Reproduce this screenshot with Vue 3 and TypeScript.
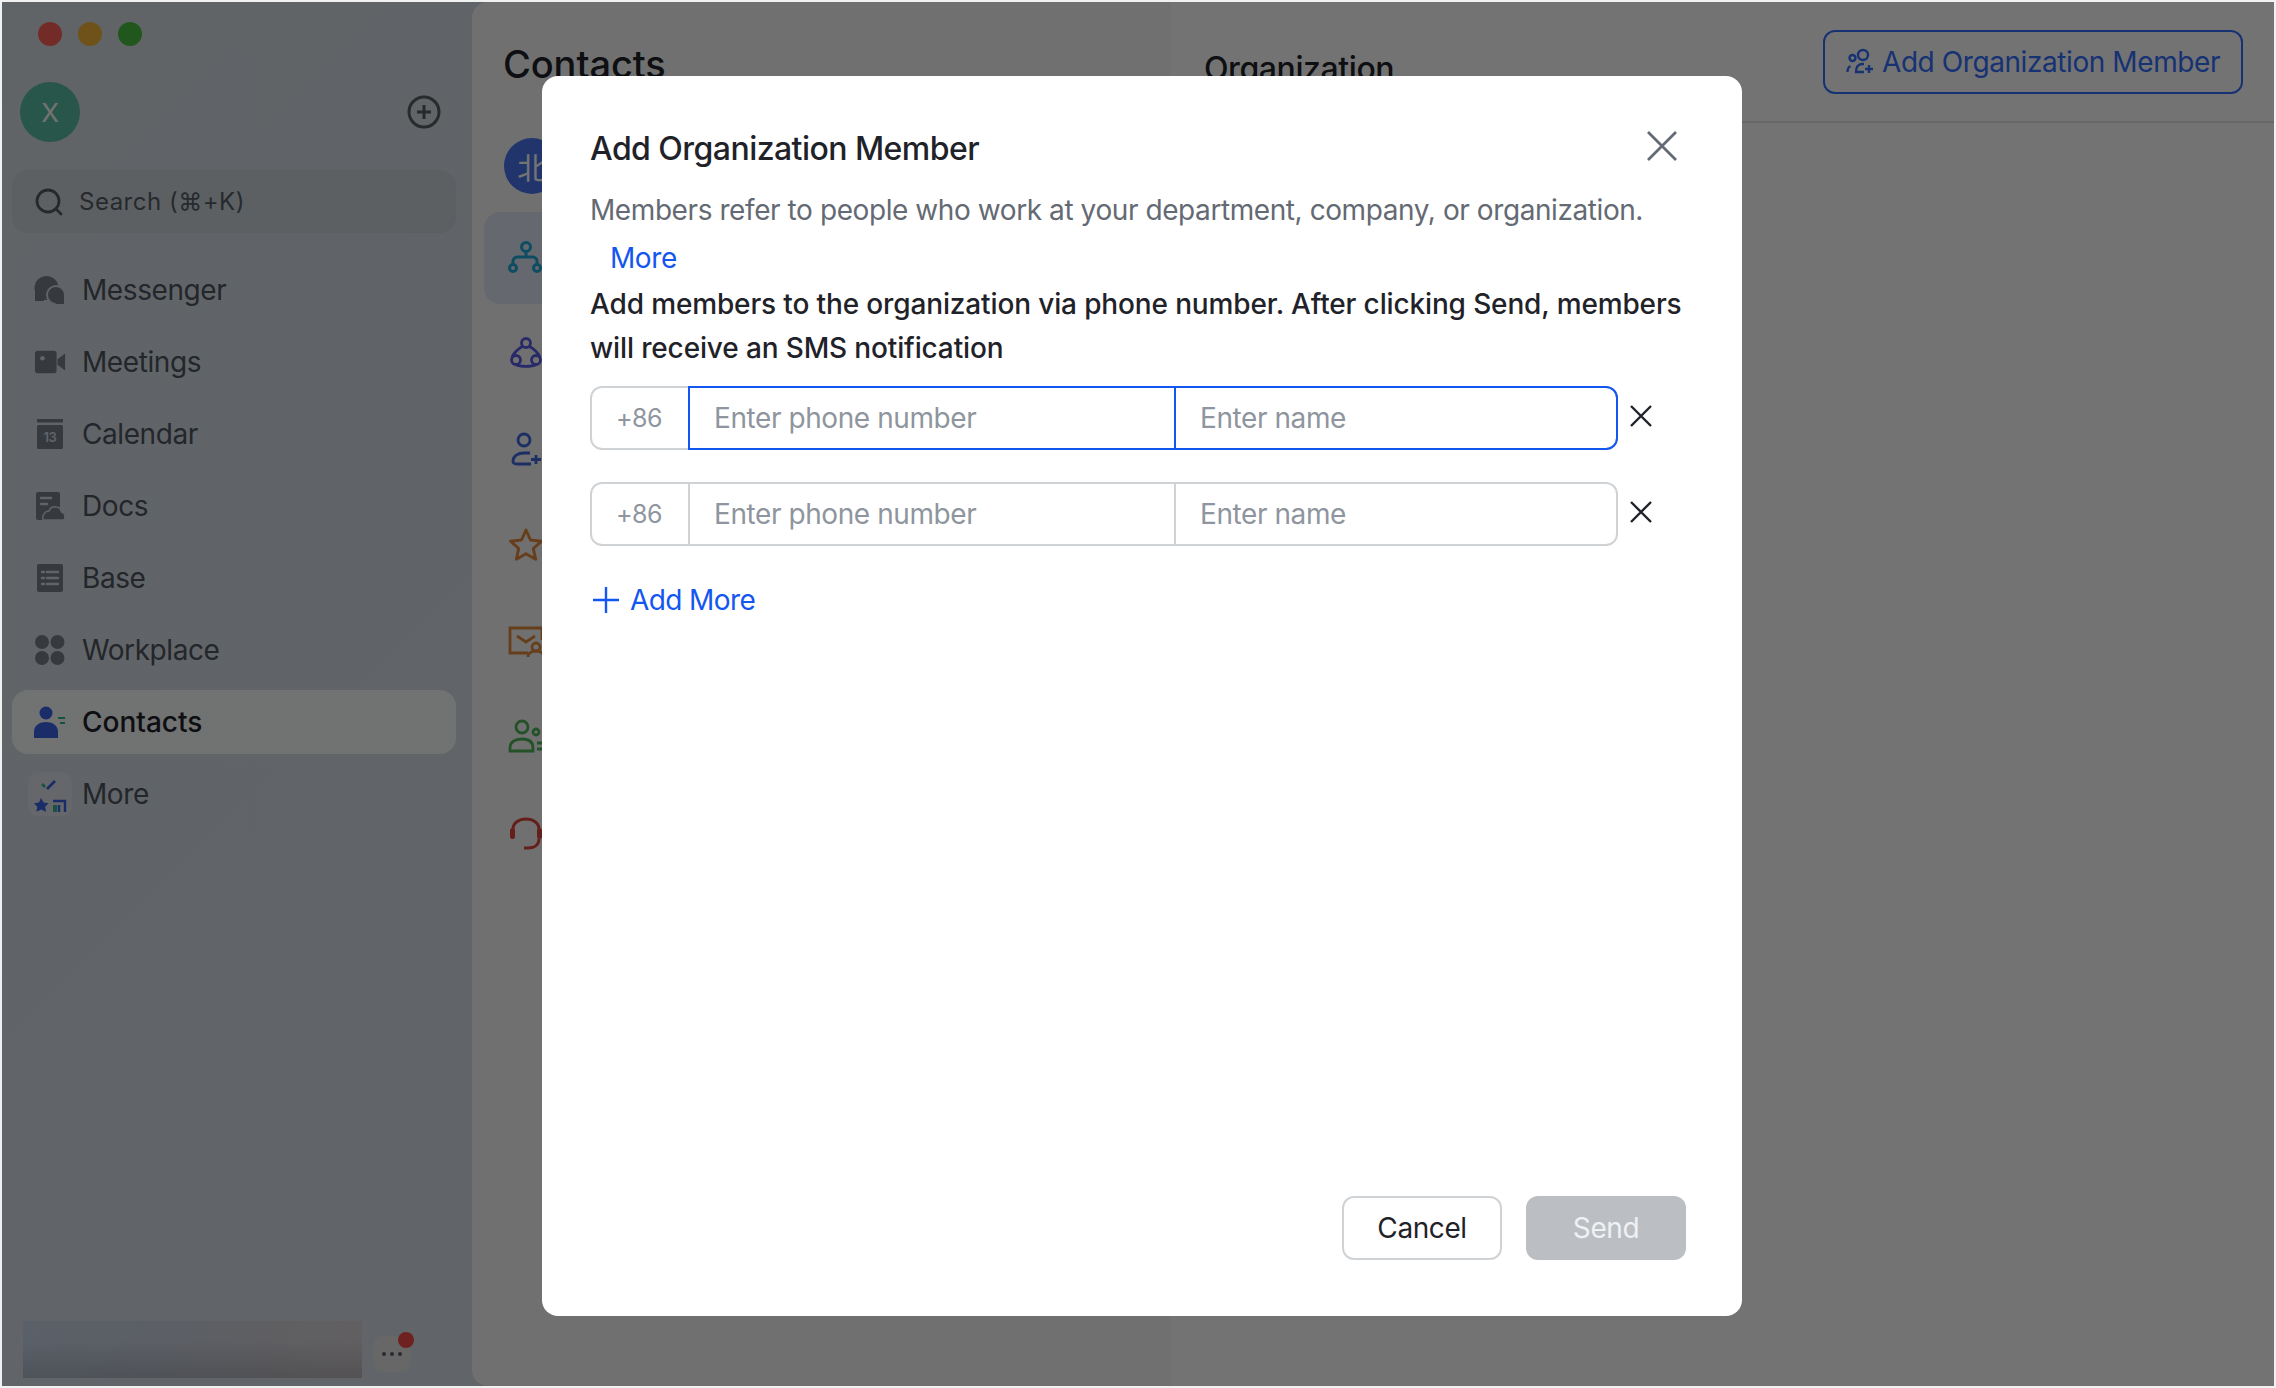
<script setup lang="ts">
interface NavItem {
  label: string;
  icon: string;
  active?: boolean;
}

interface MemberRow {
  id: number;
  focused: boolean;
}

const navItems: NavItem[] = [
  { label: 'Messenger', icon: 'messenger' },
  { label: 'Meetings', icon: 'meetings' },
  { label: 'Calendar', icon: 'calendar' },
  { label: 'Docs', icon: 'docs' },
  { label: 'Base', icon: 'base' },
  { label: 'Workplace', icon: 'workplace' },
  { label: 'Contacts', icon: 'contacts', active: true },
  { label: 'More', icon: 'more' }
];

const memberRows: MemberRow[] = [
  { id: 1, focused: true },
  { id: 2, focused: false }
];
</script>

<template>
  <div class="window">
    <aside class="sidebar">
      <div class="lights">
        <span class="light red"></span>
        <span class="light yellow"></span>
        <span class="light green"></span>
      </div>
      <div class="account">
        <div class="avatar">X</div>
        <svg class="add-icon" width="34" height="34" viewBox="0 0 34 34" fill="none" stroke="#5a5d63" stroke-width="3">
          <circle cx="17" cy="17" r="15" />
          <path d="M17 10v14M10 17h14" />
        </svg>
      </div>
      <div class="search">
        <svg width="30" height="30" viewBox="0 0 30 30" fill="none" stroke="#565a62" stroke-width="2.800">
          <circle cx="14" cy="14" r="11" />
          <path d="M22 22l5 5" stroke-linecap="round" />
        </svg>
        <span>Search (⌘+K)</span>
      </div>
      <nav class="nav">
        <div v-for="item in navItems" :key="item.label" class="nav-item" :class="{ active: item.active }">
          <span class="nav-icon">
            <svg v-if="item.icon === 'messenger'" width="32" height="32" viewBox="0 0 32 32">
              <circle cx="12.500" cy="14" r="12" fill="#78808a" />
              <path d="M1 15v12h9v-6z" fill="#78808a" />
              <circle cx="22" cy="21" r="9" fill="#78808a" stroke="#d6dde7" stroke-width="2" />
              <path d="M21 30h9v-8z" fill="#78808a" />
            </svg>
            <svg v-else-if="item.icon === 'meetings'" width="34" height="28" viewBox="0 0 34 28">
              <rect x="1" y="2" width="23" height="24" rx="3" fill="#78808a" />
              <path d="M25 11l8-6v18l-8-6z" fill="#78808a" />
              <circle cx="9" cy="10" r="2.500" fill="#d6dde7" />
            </svg>
            <svg v-else-if="item.icon === 'calendar'" width="28" height="30" viewBox="0 0 28 30">
              <rect x="1" y="0" width="26" height="3.500" fill="#78808a" />
              <rect x="1" y="6" width="26" height="24" rx="1.500" fill="#78808a" />
              <text x="14" y="23" text-anchor="middle" class="cal-num">13</text>
            </svg>
            <svg v-else-if="item.icon === 'docs'" width="30" height="30" viewBox="0 0 30 30">
              <rect x="1" y="1" width="24" height="28" rx="2" fill="#78808a" />
              <path d="M6 7h10M6 13h6" stroke="#d6dde7" stroke-width="2.500" stroke-linecap="round" />
              <path d="M8 29c-1-5 2-9 6-9 1-3 4-5 7-4 3 0 5 2 5.500 5 2 .5 3.500 3 3.500 5 0 2-1 3-2 3z" fill="#78808a" stroke="#d6dde7" stroke-width="1.500" />
            </svg>
            <svg v-else-if="item.icon === 'base'" width="28" height="30" viewBox="0 0 28 30">
              <rect x="1" y="1" width="26" height="28" rx="2" fill="#78808a" />
              <path d="M6 9h2M11 9h11M6 15h2M11 15h11M6 21h2M11 21h11" stroke="#d6dde7" stroke-width="2.400" stroke-linecap="round" />
            </svg>
            <svg v-else-if="item.icon === 'workplace'" width="30" height="32" viewBox="0 0 30 32" fill="#78808a">
              <circle cx="7" cy="8" r="7" />
              <circle cx="22.500" cy="8" r="7" />
              <circle cx="7" cy="24" r="7" />
              <circle cx="22.500" cy="24" r="7" />
            </svg>
            <svg v-else-if="item.icon === 'contacts'" width="32" height="32" viewBox="0 0 32 32">
              <circle cx="12" cy="7" r="6.500" fill="#3a64e8" />
              <path d="M0 32v-6c0-7 6-10 12-10s12 3 12 10v6z" fill="#3a64e8" />
              <path d="M24 12h7M26 17h5" stroke="#33b48c" stroke-width="2.200" />
            </svg>
            <svg v-else width="44" height="44" viewBox="0 0 44 44" class="more-icon">
              <rect x="0" y="0" width="44" height="44" rx="10" fill="#dfe4ec" />
              <path d="M19 17l8-8" stroke="#3a64e8" stroke-width="2.600" />
              <path d="M14 12l3 3" stroke="#33b48c" stroke-width="2.600" />
              <path d="M13 26l2.600 4.500 5 .7-3.500 3.600 1 5-5-2.300-4.700 2.300.9-5L6 31.200l5-.7z" fill="#3a64e8" />
              <path d="M25 29h12v11M31 33v7" fill="none" stroke="#3a64e8" stroke-width="2.400" />
              <path d="M25 33h4v7h-4z" fill="#33b48c" />
            </svg>
          </span>
          <span class="nav-label">{{ item.label }}</span>
        </div>
      </nav>
      <div class="footer">
        <div class="blur-box"></div>
        <div class="dots">
          <span></span><span></span><span></span>
          <i class="badge"></i>
        </div>
      </div>
    </aside>

    <section class="contacts-panel">
      <h1 class="contacts-title">Contacts</h1>
      <div class="org-avatar">北</div>
      <div class="entry selected">
        <svg width="36" height="36" viewBox="0 0 36 36" fill="none" stroke="#20a8d8" stroke-width="3">
          <circle cx="18" cy="8" r="4.500" />
          <circle cx="5" cy="29" r="3.500" />
          <circle cx="29" cy="29" r="3.500" />
          <path d="M18 12.500V18M5 25.500V22c0-2 2-4 4-4h16c2 0 4 2 4 4v3.500" />
        </svg>
      </div>
      <div class="entry">
        <svg width="36" height="36" viewBox="0 0 36 36" fill="none" stroke="#5a5ce6" stroke-width="2.800">
          <circle cx="18" cy="8" r="4.500" />
          <circle cx="8" cy="25" r="4.500" />
          <circle cx="28" cy="25" r="4.500" />
          <path d="M15 11c-5 3-9 7-11 11M21 11c5 3 9 7 11 11M8 29.500c4 2.500 16 2.500 20 0" />
        </svg>
      </div>
      <div class="entry">
        <svg width="36" height="36" viewBox="0 0 36 36" fill="none" stroke="#3f66e0" stroke-width="2.800">
          <circle cx="16" cy="9" r="6" />
          <path d="M23 33H9c-2 0-4 0-4-3 0-5 5-8 11-8h6" />
          <path d="M28 24v9M23 28.500h10" />
        </svg>
      </div>
      <div class="entry">
        <svg width="36" height="36" viewBox="0 0 36 36" fill="none" stroke="#e58a3c" stroke-width="3" stroke-linejoin="round">
          <path d="M18 3l4.500 10 11 1.200-8.200 7.300 2.300 10.800L18 26.800 8.400 32.300l2.300-10.800L2.500 14.200l11-1.200z" />
        </svg>
      </div>
      <div class="entry">
        <svg width="36" height="36" viewBox="0 0 36 36" fill="none" stroke="#e58a3c" stroke-width="2.800">
          <path d="M20 30H2V5h32v12" />
          <path d="M9 13l9 6 9-6" />
          <circle cx="28" cy="24" r="4" />
          <path d="M20 34c0-4 4-6 8-6s8 2 8 6" />
        </svg>
      </div>
      <div class="entry">
        <svg width="36" height="36" viewBox="0 0 36 36" fill="none" stroke="#4fb35a" stroke-width="2.800">
          <circle cx="14" cy="8" r="6" />
          <circle cx="28" cy="13" r="3" />
          <path d="M2 32v-3c0-6 5-9 12-9s11 3 11 9v3z" />
          <path d="M29 24h7M29 30h7" />
        </svg>
      </div>
      <div class="entry">
        <svg width="36" height="36" viewBox="0 0 36 36" fill="none" stroke="#e0463c" stroke-width="3">
          <path d="M5 14C5 8 11 4 18 4s13 4 13 10" />
          <path d="M31 24c0 6-5 9-11 9h-4" />
          <rect x="2" y="13" width="5" height="11" rx="2.500" fill="#e0463c" stroke="none" />
          <rect x="29" y="13" width="5" height="11" rx="2.500" fill="#e0463c" stroke="none" />
        </svg>
      </div>
    </section>

    <main class="detail">
      <header class="detail-head">
        <h2 class="detail-title">Organization</h2>
        <button class="add-member" type="button">
          <svg width="28" height="28" viewBox="0 0 28 28" fill="none" stroke="#3370ff" stroke-width="2.400">
            <circle cx="17" cy="7" r="5" />
            <circle cx="6.500" cy="10" r="3" />
            <path d="M18 16h-2c-4 0-6 3-6 8h8" />
            <path d="M1.500 24c0-3 1-5 3-6" />
            <path d="M23 17v8M19 21h8" />
          </svg>
          Add Organization Member
        </button>
      </header>
    </main>

    <div class="mask"></div>

    <div class="modal">
      <svg class="modal-close" width="34" height="34" viewBox="0 0 34 34" fill="none" stroke="#646a73" stroke-width="2.800">
        <path d="M3 3l28 28M31 3L3 31" />
      </svg>
      <h3 class="modal-title">Add Organization Member</h3>
      <p class="modal-desc">Members refer to people who work at your department, company, or organization.</p>
      <a class="modal-more">More</a>
      <p class="modal-note">Add members to the organization via phone number. After clicking Send, members will receive an SMS notification</p>

      <div class="rows">
        <div v-for="row in memberRows" :key="row.id" class="member-row">
          <div class="group" :class="{ focused: row.focused }">
            <span class="prefix">+86</span>
            <input class="phone" type="text" placeholder="Enter phone number" />
            <input class="name" type="text" placeholder="Enter name" />
          </div>
          <svg class="row-remove" width="24" height="24" viewBox="0 0 24 24" fill="none" stroke="#1f2329" stroke-width="2.400">
            <path d="M2 2l20 20M22 2L2 22" />
          </svg>
        </div>
      </div>

      <div class="add-more">
        <svg width="28" height="28" viewBox="0 0 28 28" fill="none" stroke="#1456f0" stroke-width="2.400">
          <path d="M14 1v26M1 14h26" />
        </svg>
        <span>Add More</span>
      </div>

      <div class="modal-actions">
        <button class="btn cancel" type="button">Cancel</button>
        <button class="btn send" type="button">Send</button>
      </div>
    </div>
  </div>
</template>

<style>
html,
body {
  margin: 0;
  background: #f1f1f1;
}
</style>

<style scoped>
.window {
  position: relative;
  display: flex;
  width: 2272px;
  height: 1384px;
  margin: 2px;
  overflow: hidden;
  font-family: Inter, "Noto Sans CJK SC", sans-serif;
  letter-spacing: -0.42px;
  background: linear-gradient(135deg, #d6dde5 0%, #d8dee6 50%, #dbdde5 100%);
}

.sidebar {
  display: flex;
  flex-direction: column;
  flex: 0 0 470px;
}

.lights {
  display: flex;
  gap: 16px;
  margin: 20px 0 0 36px;
}

.light {
  width: 24px;
  height: 24px;
  border-radius: 50%;
}

.light.red { background: #ff6159; }
.light.yellow { background: #f5b53b; }
.light.green { background: #4bc23f; }

.account {
  display: flex;
  align-items: center;
  justify-content: space-between;
  margin-top: 36px;
  padding: 0 31px 0 18px;
}

.avatar {
  display: flex;
  align-items: center;
  justify-content: center;
  width: 60px;
  height: 60px;
  border-radius: 50%;
  color: #fff;
  font-size: 26px;
  background: #5cbfa6;
}

.search {
  display: flex;
  align-items: center;
  gap: 15px;
  height: 63px;
  margin: 28px 16px 0 10px;
  padding-left: 21px;
  box-sizing: border-box;
  border: 1px solid #cdd3da;
  border-radius: 16px;
  color: #565d67;
  font-size: 24px;
  letter-spacing: 0.5px;
  background: #ced4dc;
}

.nav {
  display: flex;
  flex-direction: column;
  gap: 8px;
  margin: 25px 16px 0 10px;
}

.nav-item {
  display: flex;
  align-items: center;
  gap: 16px;
  height: 64px;
  padding-left: 22px;
  border-radius: 16px;
}

.nav-item.active {
  background: #fbfcfd;
}

.nav-icon {
  display: flex;
  align-items: center;
  justify-content: center;
  width: 32px;
  height: 32px;
}

.more-icon {
  flex: none;
}

.cal-num {
  fill: #d6dde7;
  font-size: 13px;
  font-weight: 600;
}

.nav-label {
  color: #4f555f;
  font-size: 28px;
}

.nav-item.active .nav-label {
  color: #1f2329;
  font-weight: 500;
  letter-spacing: 0;
}

.footer {
  display: flex;
  align-items: flex-end;
  gap: 12px;
  margin-top: auto;
  padding: 0 0 8px 21px;
}

.blur-box {
  width: 339px;
  height: 57px;
  background:
    linear-gradient(180deg, transparent 35%, rgba(0, 0, 0, 0.14) 100%),
    linear-gradient(90deg, #c8d6e8 0%, #cdd2de 50%, #d8d2d6 100%);
}

.dots {
  position: relative;
  display: flex;
  align-items: center;
  justify-content: center;
  gap: 4px;
  width: 36px;
  height: 36px;
  margin-bottom: 6px;
  border-radius: 8px;
  background: #e4e4e6;
}

.dots span {
  width: 4px;
  height: 4px;
  border-radius: 50%;
  background: #5b6068;
}

.badge {
  position: absolute;
  top: -4px;
  right: -4px;
  width: 16px;
  height: 16px;
  border-radius: 50%;
  background: #f54a45;
}

.contacts-panel {
  flex: 0 0 699px;
  padding: 0 0 0 12px;
  box-sizing: border-box;
  border-top-left-radius: 16px;
  border-bottom-left-radius: 16px;
  background: #f9f9f9;
}

.contacts-title {
  margin: 34px 0 0 19px;
  color: #1f2329;
  font-size: 38px;
  font-weight: 500;
  line-height: 56px;
  letter-spacing: -0.1px;
}

.org-avatar {
  display: flex;
  align-items: center;
  justify-content: center;
  width: 56px;
  height: 56px;
  margin: 46px 0 0 20px;
  border-radius: 50%;
  color: #fff;
  font-size: 30px;
  background: #4a76f0;
}

.entry {
  display: flex;
  align-items: center;
  height: 92px;
  margin-top: 4px;
  padding: 0 0 3px 24px;
  box-sizing: border-box;
}

.entry.selected {
  margin-top: 18px;
  border-radius: 16px;
  background: #e1e6f4;
}

.detail {
  flex: 1;
  background: #fff;
}

.detail-head {
  display: flex;
  align-items: center;
  justify-content: space-between;
  height: 121px;
  padding: 0 31px 0 33px;
  box-sizing: border-box;
  border-bottom: 2px solid #e4e4e4;
}

.detail-title {
  margin: 14px 0 0;
  color: #1f2329;
  font-size: 32px;
  font-weight: 500;
}

.add-member {
  display: flex;
  align-items: center;
  justify-content: center;
  gap: 8px;
  width: 420px;
  height: 64px;
  border: 2px solid #3370ff;
  border-radius: 12px;
  color: #3370ff;
  font-family: inherit;
  font-size: 28px;
  letter-spacing: inherit;
  background: transparent;
}

.mask {
  position: absolute;
  inset: 0;
  background: rgba(0, 0, 0, 0.55);
}

.modal {
  position: absolute;
  top: 74px;
  left: 540px;
  display: flex;
  flex-direction: column;
  width: 1200px;
  height: 1240px;
  padding: 51px 56px 56px 48px;
  box-sizing: border-box;
  border-radius: 16px;
  background: #fff;
}

.modal-close {
  position: absolute;
  top: 53px;
  right: 63px;
}

.modal-title {
  margin: 0;
  color: #1f2329;
  font-size: 32px;
  font-weight: 500;
  line-height: 44px;
  letter-spacing: -0.55px;
}

.modal-desc {
  margin: 17px 0 0;
  color: #646a73;
  font-size: 28px;
  line-height: 44px;
}

.modal-more {
  margin: 2px 0 0 20px;
  color: #1456f0;
  font-size: 28px;
  line-height: 48px;
}

.modal-note {
  margin: 0;
  color: #1f2329;
  font-size: 28px;
  font-weight: 500;
  line-height: 44px;
  letter-spacing: -0.14px;
}

.rows {
  display: flex;
  flex-direction: column;
  gap: 32px;
  margin-top: 16px;
}

.member-row {
  display: flex;
  align-items: center;
  gap: 11px;
}

.row-remove {
  margin-top: -4px;
}

.group {
  position: relative;
  display: flex;
  width: 1028px;
  height: 64px;
  box-sizing: border-box;
  border: 2px solid #d0d3d6;
  border-radius: 12px;
}

.prefix {
  display: flex;
  align-items: center;
  justify-content: center;
  width: 98px;
  padding-right: 2px;
  color: #8f959e;
  font-size: 25px;
  box-sizing: border-box;
  border-right: 2px solid #d0d3d6;
}

.group input {
  min-width: 0;
  padding: 0 0 0 24px;
  box-sizing: border-box;
  border: 0;
  outline: 0;
  color: #1f2329;
  font-family: inherit;
  font-size: 28px;
  letter-spacing: inherit;
  background: transparent;
}

.group input::placeholder {
  color: #8f959e;
  opacity: 1;
}

.phone {
  width: 486px;
  border-right: 2px solid #d0d3d6 !important;
}

.name {
  flex: 1;
}

.group.focused::after {
  content: "";
  position: absolute;
  top: -2px;
  right: -2px;
  bottom: -2px;
  left: 96px;
  border: 2px solid #1456f0;
  border-radius: 0 12px 12px 0;
  pointer-events: none;
}

.group.focused .phone {
  border-right-color: #1456f0 !important;
}

.add-more {
  display: flex;
  align-items: center;
  gap: 10px;
  margin: 32px 0 0 2px;
  color: #1456f0;
  font-size: 28px;
  line-height: 44px;
  letter-spacing: -0.6px;
}

.modal-actions {
  display: flex;
  justify-content: flex-end;
  gap: 24px;
  margin-top: auto;
}

.btn {
  width: 160px;
  height: 64px;
  border-radius: 12px;
  font-family: inherit;
  font-size: 28px;
  letter-spacing: inherit;
}

.cancel {
  border: 2px solid #d0d3d6;
  color: #1f2329;
  background: #fff;
}

.send {
  border: 0;
  color: #f0f1f3;
  background: #bbbfc4;
}
</style>
